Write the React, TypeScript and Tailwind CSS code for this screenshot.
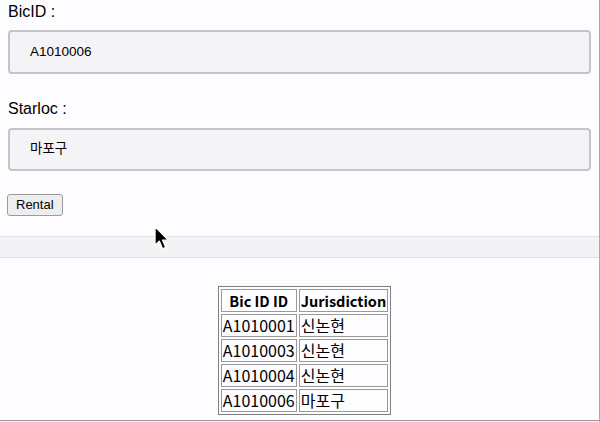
export default function App() {
  const rows = [
    ["A1010001", "신논현"],
    ["A1010003", "신논현"],
    ["A1010004", "신논현"],
    ["A1010006", "마포구"],
  ];
  return (
    <div
      className="relative h-[422px] w-[600px] overflow-hidden bg-[#fdfcfe] text-black border-r border-[#a9a9a9]"
      style={{ fontFamily: '"Liberation Sans", "Noto Sans CJK KR", sans-serif' }}
    >
      <div className="px-2">
        <div className="pt-[3px] text-[16px] leading-[18px]">BicID :</div>
        <div className="mt-[9px] flex h-[44px] items-center rounded-[4px] border-2 border-[#c5c4c6] bg-[#f4f3f5] pl-[20px] text-[13.5px]">
          A1010006
        </div>
        <div className="mt-[26px] text-[16px] leading-[18px]">Starloc :</div>
        <div className="mt-[10px] flex h-[43px] items-center rounded-[4px] border-2 border-[#c5c4c6] bg-[#f4f3f5] pl-[20px] text-[13.5px]">
          마포구
        </div>
        <div className="mt-[21px]">
          <button className="ml-[-1px] h-[22px] rounded-[3px] border border-[#9b9b9b] bg-[#efeeef] px-[8px] text-[13px] leading-[18px]">
            Rental
          </button>
        </div>
      </div>
      <div className="mt-[20px] h-[22px] border-y border-[#e0dfe1] bg-[#f3f2f4]" />
      <div className="mt-[28px] flex justify-center pl-[10px]">
        <table
          className="border-separate border-spacing-[2px] border border-[#808080] text-[16px] leading-[19px]"
          style={{ fontFamily: '"Noto Sans CJK KR", sans-serif' }}
        >
          <thead>
            <tr>
              <th className="border border-[#9a9a9a] px-[1px] py-[1px] text-[14.5px] font-bold">Bic ID ID</th>
              <th className="border border-[#9a9a9a] px-[1px] py-[1px] text-left text-[14.5px] font-bold">Jurisdiction</th>
            </tr>
          </thead>
          <tbody>
            {rows.map(([id, j]) => (
              <tr key={id}>
                <td className="border border-[#9a9a9a] px-[1px] py-[1px]">{id}</td>
                <td className="border border-[#9a9a9a] px-[1px] py-[1px]">{j}</td>
              </tr>
            ))}
          </tbody>
        </table>
      </div>
      <div className="absolute bottom-0 left-0 right-0 h-[2px] border-t border-[#9a9a9a] bg-[#f3f2f4]" />
      <svg className="absolute left-[153px] top-[225px]" width="18" height="26" viewBox="0 0 16 24">
        <path d="M1.5 1.5 L1.5 19 L5.5 15 L8.5 22 L11.5 20.7 L8.6 14 L14 14 Z" fill="#000" stroke="#fff" strokeWidth="1.3" strokeLinejoin="round" />
      </svg>
    </div>
  );
}
